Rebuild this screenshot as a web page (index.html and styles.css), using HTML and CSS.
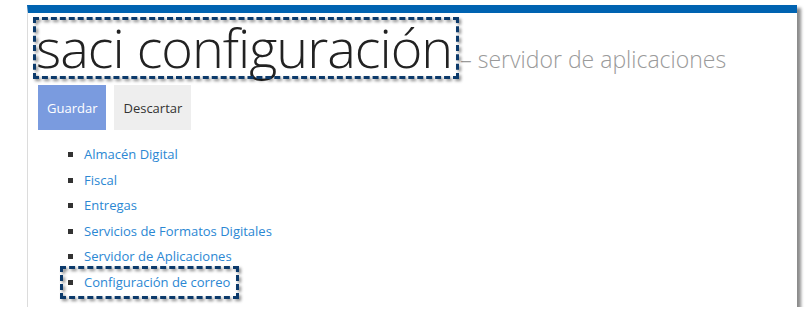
FILE: index.html
```html
<!DOCTYPE html>
<html lang="es">
<head>
  <meta charset="UTF-8" />
  <meta name="viewport" content="width=device-width, initial-scale=1.0" />
  <title>saci configuración</title>
  <link rel="stylesheet" href="styles.css">
</head>
<body>
  <div class="panel">
    <div class="header">
      <h1 class="title marked">saci configuración</h1>
      <span class="subtitle">– servidor de aplicaciones</span>
    </div>

    <div class="actions">
      <button class="btn btn-primary">Guardar</button>
      <button class="btn btn-default">Descartar</button>
    </div>

    <ul class="menu">
      <li><a href="#">Almacén Digital</a></li>
      <li><a href="#">Fiscal</a></li>
      <li><a href="#">Entregas</a></li>
      <li><a href="#">Servicios de Formatos Digitales</a></li>
      <li><a href="#">Servidor de Aplicaciones</a></li>
      <li class="marked item-marked"><a href="#">Configuración de correo</a></li>
    </ul>
  </div>
</body>
</html>
```

FILE: styles.css
```css
body {
  font-family: 'Open Sans', 'Noto Sans', sans-serif;
  background: #ffffff;
  margin: 0;
  padding: 5px 0 0 27px;
}
.panel {
  width: 769px;
  height: 294px;
  background: white;
  border-top: 8px solid #0063b1;
  border-left: 1px solid #dcdcdc;
  box-shadow: 4px 3px 3px rgba(0, 0, 0, 0.45);
}
.header {
  display: flex;
  align-items: baseline;
  padding: 4px 0 0 8px;
  height: 68px;
}
.title {
  margin: 0;
  font-weight: 300;
  font-size: 54px;
  line-height: 60px;
  color: #222;
  letter-spacing: -1px;
}
.subtitle {
  font-weight: 300;
  font-size: 23px;
  color: #9a9a9a;
  margin-left: 8px;
}
.marked {
  position: relative;
}
.marked::before {
  content: '';
  position: absolute;
  left: -3px;
  right: -7px;
  top: 0;
  bottom: -2px;
  border: 3px dashed #0c3a6b;
  filter: drop-shadow(2px 2px 1.5px rgba(0, 0, 0, 0.45));
  pointer-events: none;
}
.actions {
  display: flex;
  gap: 8px;
  padding-left: 10px;
}
.btn {
  font-family: inherit;
  font-size: 13px;
  height: 45px;
  border: none;
  padding: 0 9px;
}
.btn-primary {
  background: #7a9bdf;
  color: white;
}
.btn-default {
  background: #eeeeee;
  color: #333;
}
.menu {
  list-style: square;
  margin: 12px 0 0 0;
  padding-left: 56px;
}
.menu li {
  font-size: 13px;
  line-height: 25.6px;
  color: #333;
}
.menu a {
  color: #2b87d3;
  text-decoration: none;
}
.menu li.item-marked {
  width: fit-content;
}
.item-marked::before {
  left: -24px;
  right: -9px;
  top: -4px;
  bottom: -3px;
}
```
